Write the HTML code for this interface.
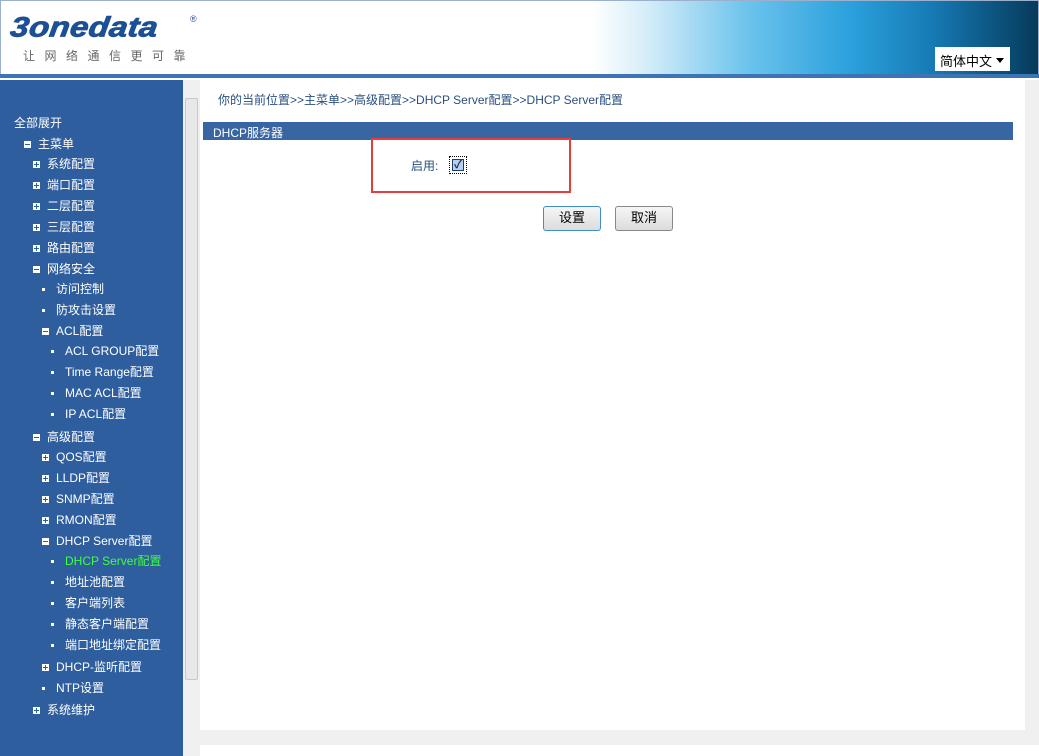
<!DOCTYPE html>
<html><head><meta charset="utf-8"><style>
*{margin:0;padding:0;box-sizing:border-box}
body{width:1039px;height:756px;overflow:hidden;background:#fff;font-family:"Liberation Sans","Noto Sans CJK SC",sans-serif;font-size:12px;position:relative}
#hdr{position:absolute;left:0;top:0;width:1039px;height:76px;border:1px solid #9bb0cc;background:linear-gradient(90deg,#fff 0%,#fff 57%,#d8eef9 62%,#6cc3ec 72%,#2aa0dc 82%,#1679b3 90%,#063a5a 100%)}
#line{position:absolute;left:0;top:74px;width:1039px;height:4px;background:#3d74b6}
.logo{position:absolute;left:12px;top:10px;font:italic 900 33px "Liberation Sans",sans-serif;color:#1c4f96;letter-spacing:0.3px;transform:skewX(-8deg) scaleY(0.85);transform-origin:left top;-webkit-text-stroke:1px #1c4f96}
.reg{position:absolute;left:189px;top:13px;font-size:9px;color:#1c4f96}
.slog{position:absolute;left:22px;top:46px;font-size:12px;color:#666;letter-spacing:9.5px}
.lang{position:absolute;left:934px;top:46px;width:75px;height:24px;background:#fff;font-size:13px;padding:4px 5px;color:#000}
.lang:after{content:"";position:absolute;right:6px;top:11px;border:4px solid transparent;border-top:5px solid #000}
#side{position:absolute;left:0;top:80px;width:183px;height:676px;background:#2f5e9e;color:#fff;font-size:12px}
.it{position:absolute;white-space:nowrap;line-height:16px}
.pl,.mi{position:absolute;width:7px;height:7px;background:#fff;top:5px}
.pl:before,.mi:before{content:"";position:absolute;left:1px;top:3px;width:5px;height:1px;background:#2f5e9e}
.pl:after{content:"";position:absolute;left:3px;top:1px;width:1px;height:5px;background:#2f5e9e}
.dt{position:absolute;width:3px;height:3px;background:#fff;top:7px}
#vs{position:absolute;left:183px;top:80px;width:17px;height:676px;background:#f0f0f0}
#vth{position:absolute;left:185px;top:98px;width:13px;height:582px;background:#e8e8e8;border:1px solid #c8c8c8;border-radius:2px}
#main{position:absolute;left:200px;top:80px;width:825px;height:650px}
.crumb{position:absolute;left:18px;top:11px;font-size:12px;color:#2a4f7f}
.bar{position:absolute;left:3px;top:42px;width:810px;height:18px;background:#3866a3;color:#fff;font-size:12px;padding:2px 10px}
.red{position:absolute;left:171px;top:58px;width:200px;height:55px;border:2px solid #e63c3c}
.lbl{position:absolute;left:211px;top:77px;color:#2a4f7f;font-size:12px}
.cb{position:absolute;left:249px;top:76px;width:18px;height:18px;border:1px dotted #000;padding:2px}
.cb div{width:12px;height:12px;border:1px solid #1c3c6c;background:#b8d0ec;color:#1a2a50;font-size:11px;line-height:10px;text-align:center;font-weight:bold}
.btn{position:absolute;top:126px;width:58px;height:25px;border:1px solid #888;border-radius:3px;background:linear-gradient(#f6f6f6,#dcdcdc);font-size:13px;text-align:center;line-height:22px}
#rs{position:absolute;left:1025px;top:80px;width:14px;height:650px;background:#f0f0f0}
#bs{position:absolute;left:200px;top:730px;width:839px;height:15px;background:#f0f0f0}
</style></head><body>
<div id="hdr"><div class="logo">3onedata</div><div class="reg">®</div><div class="slog">让网络通信更可靠</div><div class="lang">简体中文</div></div>
<div id="line"></div>
<div id="side">
<div class="it" style="left:14px;top:35px">全部展开</div>
<div class="it" style="left:24px;top:56px"><span class="mi" style="left:0"></span><span style="margin-left:14px">主菜单</span></div>
<div class="it" style="left:33px;top:76px"><span class="pl"></span><span style="margin-left:14px">系统配置</span></div>
<div class="it" style="left:33px;top:97px"><span class="pl"></span><span style="margin-left:14px">端口配置</span></div>
<div class="it" style="left:33px;top:118px"><span class="pl"></span><span style="margin-left:14px">二层配置</span></div>
<div class="it" style="left:33px;top:139px"><span class="pl"></span><span style="margin-left:14px">三层配置</span></div>
<div class="it" style="left:33px;top:160px"><span class="pl"></span><span style="margin-left:14px">路由配置</span></div>
<div class="it" style="left:33px;top:181px"><span class="mi"></span><span style="margin-left:14px">网络安全</span></div>
<div class="it" style="left:42px;top:201px"><span class="dt" style="left:0"></span><span style="margin-left:14px">访问控制</span></div>
<div class="it" style="left:42px;top:222px"><span class="dt"></span><span style="margin-left:14px">防攻击设置</span></div>
<div class="it" style="left:42px;top:243px"><span class="mi"></span><span style="margin-left:14px">ACL配置</span></div>
<div class="it" style="left:51px;top:263px"><span class="dt"></span><span style="margin-left:14px">ACL GROUP配置</span></div>
<div class="it" style="left:51px;top:284px"><span class="dt"></span><span style="margin-left:14px">Time Range配置</span></div>
<div class="it" style="left:51px;top:305px"><span class="dt"></span><span style="margin-left:14px">MAC ACL配置</span></div>
<div class="it" style="left:51px;top:326px"><span class="dt"></span><span style="margin-left:14px">IP ACL配置</span></div>
<div class="it" style="left:33px;top:349px"><span class="mi"></span><span style="margin-left:14px">高级配置</span></div>
<div class="it" style="left:42px;top:369px"><span class="pl"></span><span style="margin-left:14px">QOS配置</span></div>
<div class="it" style="left:42px;top:390px"><span class="pl"></span><span style="margin-left:14px">LLDP配置</span></div>
<div class="it" style="left:42px;top:411px"><span class="pl"></span><span style="margin-left:14px">SNMP配置</span></div>
<div class="it" style="left:42px;top:432px"><span class="pl"></span><span style="margin-left:14px">RMON配置</span></div>
<div class="it" style="left:42px;top:453px"><span class="mi"></span><span style="margin-left:14px">DHCP Server配置</span></div>
<div class="it" style="left:51px;top:473px"><span class="dt"></span><span style="margin-left:14px;color:#3fff3f">DHCP Server配置</span></div>
<div class="it" style="left:51px;top:494px"><span class="dt"></span><span style="margin-left:14px">地址池配置</span></div>
<div class="it" style="left:51px;top:515px"><span class="dt"></span><span style="margin-left:14px">客户端列表</span></div>
<div class="it" style="left:51px;top:536px"><span class="dt"></span><span style="margin-left:14px">静态客户端配置</span></div>
<div class="it" style="left:51px;top:557px"><span class="dt"></span><span style="margin-left:14px">端口地址绑定配置</span></div>
<div class="it" style="left:42px;top:579px"><span class="pl"></span><span style="margin-left:14px">DHCP-监听配置</span></div>
<div class="it" style="left:42px;top:600px"><span class="dt"></span><span style="margin-left:14px">NTP设置</span></div>
<div class="it" style="left:33px;top:622px"><span class="pl"></span><span style="margin-left:14px">系统维护</span></div>
</div>
<div id="vs"></div><div id="vth"></div>
<div id="main">
<div class="crumb">你的当前位置&gt;&gt;主菜单&gt;&gt;高级配置&gt;&gt;DHCP Server配置&gt;&gt;DHCP Server配置</div>
<div class="bar">DHCP服务器</div>
<div class="red"></div>
<div class="lbl">启用:</div>
<div class="cb"><div>✓</div></div>
<div class="btn" style="left:343px;border-color:#3c8fc8">设置</div>
<div class="btn" style="left:415px">取消</div>
</div>
<div id="rs"></div><div id="bs"></div>
</body></html>
